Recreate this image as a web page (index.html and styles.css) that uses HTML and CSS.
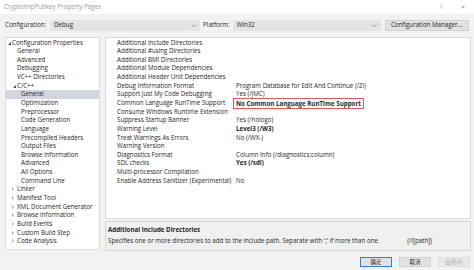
FILE: index.html
```html
<!DOCTYPE html>
<html lang="en">
<head>
  <meta charset="UTF-8">
  <meta name="viewport" content="width=device-width, initial-scale=1.0">
  <title>CryptoImpPubkey Property Pages</title>
  <link rel="stylesheet" href="styles.css">
</head>
<body>

  <!-- title bar -->
  <div class="titlebar">
    <span class="title">CryptoImpPubkey Property Pages</span>
    <span class="title-btn">?</span>
    <span class="title-btn close">&#x2715;</span>
  </div>

  <!-- configuration / platform row -->
  <div class="config-row">
    <span class="label">Configuration:</span>
    <div class="combo combo-config">Debug
      <svg class="chev" width="5" height="3" viewBox="0 0 5 3"><path d="M0.5 0.5 L2.5 2.5 L4.5 0.5" fill="none" stroke="#888" stroke-width="0.8"/></svg>
    </div>
    <span class="label label-platform">Platform:</span>
    <div class="combo combo-platform">Win32
      <svg class="chev" width="5" height="3" viewBox="0 0 5 3"><path d="M0.5 0.5 L2.5 2.5 L4.5 0.5" fill="none" stroke="#888" stroke-width="0.8"/></svg>
    </div>
    <div class="btn btn-manager">Configuration Manager...</div>
  </div>

  <div class="main">
    <!-- left tree -->
    <div class="tree">
      <div class="node l0"><span class="arrow exp"></span>Configuration Properties</div>
      <div class="node l1">General</div>
      <div class="node l1">Advanced</div>
      <div class="node l1">Debugging</div>
      <div class="node l1">VC++ Directories</div>
      <div class="node l1 has-arrow"><span class="arrow exp"></span>C/C++</div>
      <div class="node l2 selected">General</div>
      <div class="node l2">Optimization</div>
      <div class="node l2">Preprocessor</div>
      <div class="node l2">Code Generation</div>
      <div class="node l2">Language</div>
      <div class="node l2">Precompiled Headers</div>
      <div class="node l2">Output Files</div>
      <div class="node l2">Browse Information</div>
      <div class="node l2">Advanced</div>
      <div class="node l2">All Options</div>
      <div class="node l2">Command Line</div>
      <div class="node l1 has-arrow"><span class="arrow col"></span>Linker</div>
      <div class="node l1 has-arrow"><span class="arrow col"></span>Manifest Tool</div>
      <div class="node l1 has-arrow"><span class="arrow col"></span>XML Document Generator</div>
      <div class="node l1 has-arrow"><span class="arrow col"></span>Browse Information</div>
      <div class="node l1 has-arrow"><span class="arrow col"></span>Build Events</div>
      <div class="node l1 has-arrow"><span class="arrow col"></span>Custom Build Step</div>
      <div class="node l1 has-arrow"><span class="arrow col"></span>Code Analysis</div>
    </div>

    <div class="right">
      <!-- property grid -->
      <div class="props">
        <div class="pname">Additional Include Directories</div><div class="pval"></div>
        <div class="pname">Additional #using Directories</div><div class="pval"></div>
        <div class="pname">Additional BMI Directories</div><div class="pval"></div>
        <div class="pname">Additional Module Dependencies</div><div class="pval"></div>
        <div class="pname">Additional Header Unit Dependencies</div><div class="pval"></div>
        <div class="pname">Debug Information Format</div><div class="pval">Program Database for Edit And Continue (/ZI)</div>
        <div class="pname">Support Just My Code Debugging</div><div class="pval">Yes (/JMC)</div>
        <div class="pname">Common Language RunTime Support</div><div class="pval"><span class="marked">No Common Language RunTime Support</span></div>
        <div class="pname">Consume Windows Runtime Extension</div><div class="pval"></div>
        <div class="pname">Suppress Startup Banner</div><div class="pval">Yes (/nologo)</div>
        <div class="pname">Warning Level</div><div class="pval bold">Level3 (/W3)</div>
        <div class="pname">Treat Warnings As Errors</div><div class="pval">No (/WX-)</div>
        <div class="pname">Warning Version</div><div class="pval"></div>
        <div class="pname">Diagnostics Format</div><div class="pval">Column Info (/diagnostics:column)</div>
        <div class="pname">SDL checks</div><div class="pval bold">Yes (/sdl)</div>
        <div class="pname">Multi-processor Compilation</div><div class="pval"></div>
        <div class="pname">Enable Address Sanitizer (Experimental)</div><div class="pval">No</div>
      </div>

      <!-- description -->
      <div class="desc">
        <div class="desc-title">Additional Include Directories</div>
        <div class="desc-text">
          <span>Specifies one or more directories to add to the include path. Separate with ';' if more than one.</span>
          <span class="desc-switch">(/I[path])</span>
        </div>
      </div>
    </div>
  </div>

  <!-- dialog buttons -->
  <div class="button-row">
    <div class="btn dlg default">确定</div>
    <div class="btn dlg">取消</div>
    <div class="btn dlg disabled">应用(A)</div>
  </div>

</body>
</html>
```

FILE: styles.css
```css
/* === base === */
body {
  margin: 0;
  width: 474px;
  height: 270px;
  overflow: hidden;
  background: #f2f2f2;
  color: #262626;
  font-family: "Open Sans", "Noto Sans", "Noto Sans CJK SC", sans-serif;
  font-size: 6.2px;
  line-height: 8.65px;
}

/* === title bar === */
.titlebar {
  height: 14px;
  background: #fff;
  display: flex;
  align-items: center;
  padding: 0 6px 0 4px;
  color: #9a9a9a;
}
.title {
  flex: 1;
}
.title-btn {
  width: 10px;
  text-align: center;
  margin-left: 12px;
  font-family: "DejaVu Sans", sans-serif;
  font-size: 5.5px;
}

/* === configuration row === */
.config-row {
  display: flex;
  align-items: center;
  height: 11px;
  margin-top: 6px;
  padding: 0 4px 0 5px;
}
.label {
  margin-right: 4px;
}
.label-platform {
  margin-left: 3px;
  margin-right: 3px;
}
.combo {
  height: 11px;
  background: #e4e4e4;
  display: flex;
  align-items: center;
  padding-left: 4px;
  padding-right: 4px;
  box-sizing: border-box;
  justify-content: space-between;
}
.combo-config {
  width: 150px;
}
.combo-platform {
  width: 148px;
}
.btn {
  height: 11px;
  box-sizing: border-box;
  background: #e1e1e1;
  border: 1px solid #d2d2d2;
  display: flex;
  align-items: center;
  justify-content: center;
}
.btn-manager {
  width: 84px;
  margin-left: 4px;
}

/* === main area === */
.main {
  display: flex;
  gap: 5px;
  margin-top: 6px;
  padding: 0 3px 0 5px;
  height: 214px;
}
.tree {
  width: 95px;
  height: 213px;
  background: #fff;
  border: 1px solid #dadada;
  padding-top: 0.5px;
  box-sizing: border-box;
}
.node {
  white-space: nowrap;
  height: 8.65px;
}
.node.l0 { padding-left: 1px; }
.node.l1 { padding-left: 11px; }
.node.l1.has-arrow { padding-left: 6px; }
.node.l2 { padding-left: 15px; }
.node.selected {
  background: #d3d6de;
}
.arrow {
  display: inline-block;
  width: 5px;
  height: 5px;
  position: relative;
  vertical-align: -0.5px;
}
.arrow.exp::after {
  content: "";
  position: absolute;
  right: 1.5px;
  bottom: 0;
  border-style: solid;
  border-width: 0 0 3px 3px;
  border-color: transparent transparent #555 transparent;
}
.arrow.col::after {
  content: "";
  position: absolute;
  left: 0;
  top: 0.5px;
  width: 0;
  height: 0;
  border-style: solid;
  border-width: 2px 0 2px 2.5px;
  border-color: transparent transparent transparent #b5b5b5;
}

.right {
  flex: 1;
  display: flex;
  flex-direction: column;
  gap: 2px;
}
.props {
  height: 183px;
  background: #fff;
  border: 1px solid #dadada;
  box-sizing: border-box;
  display: grid;
  grid-template-columns: 119px 1fr;
  grid-auto-rows: 8.65px;
  align-content: start;
  padding: 0.5px 0 0 11px;
}
.pname, .pval {
  white-space: nowrap;
}
.bold {
  font-weight: 700;
}
.marked {
  display: inline-block;
  font-weight: 700;
  border: 1px solid #e0595b;
  padding: 0 2px 0 2px;
  line-height: 9.5px;
  margin: -1px 0 0 -3px;
}

.desc {
  height: 30px;
  background: #f0f0f0;
  border: 1px solid #d6d6d6;
  box-sizing: border-box;
  padding: 1.5px 2px 0 2px;
  line-height: 11px;
}
.desc-title {
  font-weight: 700;
}
.desc-switch {
  margin-left: 26px;
}

/* === dialog buttons === */
.button-row {
  display: flex;
  justify-content: flex-end;
  gap: 7px;
  padding-right: 4px;
  margin-top: 6px;
}
.btn.dlg {
  width: 32px;
  height: 10px;
  font-family: "Noto Sans CJK SC", sans-serif;
  font-size: 5.5px;
}
.btn.dlg.default {
  border-color: #2f7fd3;
}
.btn.dlg.disabled {
  color: #a8a8a8;
  background: #e8e8e8;
  border-color: #e0e0e0;
}
```
